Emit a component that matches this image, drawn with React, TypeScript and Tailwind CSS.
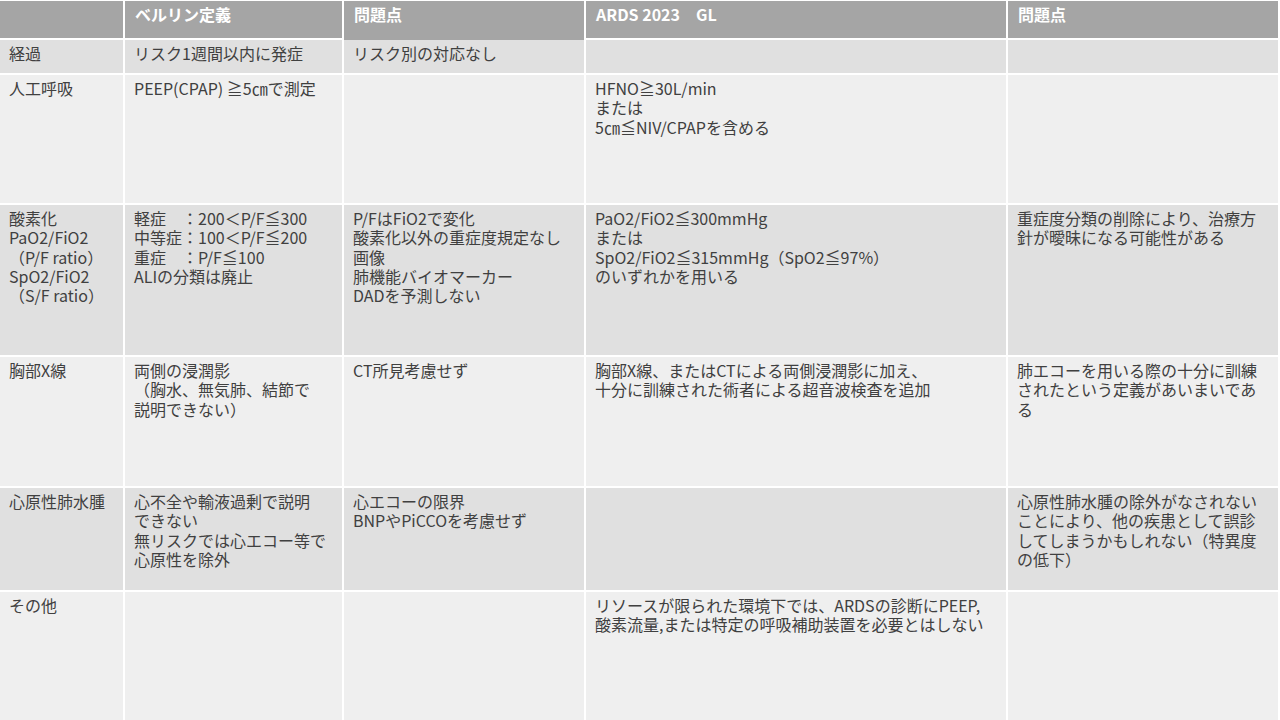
const headers = ['', 'ベルリン定義', '問題点', 'ARDS 2023　GL', '問題点'];

type Row = {
  tone: 'dark' | 'light';
  cells: string[][];
};

const rows: Row[] = [
  {
    tone: 'dark',
    cells: [['経過'], ['リスク1週間以内に発症'], ['リスク別の対応なし'], [], []],
  },
  {
    tone: 'light',
    cells: [
      ['人工呼吸'],
      ['PEEP(CPAP) ≧5㎝で測定'],
      [],
      ['HFNO≧30L/min', 'または', '5㎝≦NIV/CPAPを含める'],
      [],
    ],
  },
  {
    tone: 'dark',
    cells: [
      ['酸素化', 'PaO2/FiO2', '（P/F ratio）', 'SpO2/FiO2', '（S/F ratio）'],
      ['軽症　：200＜P/F≦300', '中等症：100＜P/F≦200', '重症　：P/F≦100', 'ALIの分類は廃止'],
      ['P/FはFiO2で変化', '酸素化以外の重症度規定なし', '画像', '肺機能バイオマーカー', 'DADを予測しない'],
      ['PaO2/FiO2≦300mmHg', 'または', 'SpO2/FiO2≦315mmHg（SpO2≦97%）', 'のいずれかを用いる'],
      ['重症度分類の削除により、治療方', '針が曖昧になる可能性がある'],
    ],
  },
  {
    tone: 'light',
    cells: [
      ['胸部X線'],
      ['両側の浸潤影', '（胸水、無気肺、結節で', '説明できない）'],
      ['CT所見考慮せず'],
      ['胸部X線、またはCTによる両側浸潤影に加え、', '十分に訓練された術者による超音波検査を追加'],
      ['肺エコーを用いる際の十分に訓練', 'されたという定義があいまいであ', 'る'],
    ],
  },
  {
    tone: 'dark',
    cells: [
      ['心原性肺水腫'],
      ['心不全や輸液過剰で説明', 'できない', '無リスクでは心エコー等で', '心原性を除外'],
      ['心エコーの限界', 'BNPやPiCCOを考慮せず'],
      [],
      ['心原性肺水腫の除外がなされない', 'ことにより、他の疾患として誤診', 'してしまうかもしれない（特異度', 'の低下）'],
    ],
  },
  {
    tone: 'light',
    cells: [
      ['その他'],
      [],
      [],
      ['リソースが限られた環境下では、ARDSの診断にPEEP,', '酸素流量,または特定の呼吸補助装置を必要とはしない'],
      [],
    ],
  },
];

export default function App() {
  return (
    <div
      className="w-[1280px] h-[720px] overflow-hidden bg-white pt-[1px]"
      style={{ fontFamily: '"Noto Sans CJK JP", "Noto Sans", sans-serif' }}
    >
      <div className="grid grid-cols-[123px_217px_240px_420px_270px] grid-rows-[37px_33px_128px_150px_129px_102px_128px] gap-[2px] text-[16px] leading-[19.3px]">
        {headers.map((h, i) => (
          <div
            key={'h' + i}
            className={
              'bg-[#a5a5a5] px-[10px] pt-[4px] font-bold text-white whitespace-nowrap' +
              (i === 2 ? ' -mb-[2px]' : '')
            }
          >
            {h}
          </div>
        ))}
        {rows.map((row, r) =>
          row.cells.map((lines, c) => (
            <div
              key={r + '-' + c}
              className={
                (row.tone === 'dark' ? 'bg-[#e0e0e0]' : 'bg-[#efefef]') +
                ' px-[9px] pt-[4px] text-[#404040] whitespace-nowrap'
              }
            >
              {lines.map((line, k) => (
                <div key={k}>{line}</div>
              ))}
            </div>
          ))
        )}
      </div>
    </div>
  );
}
